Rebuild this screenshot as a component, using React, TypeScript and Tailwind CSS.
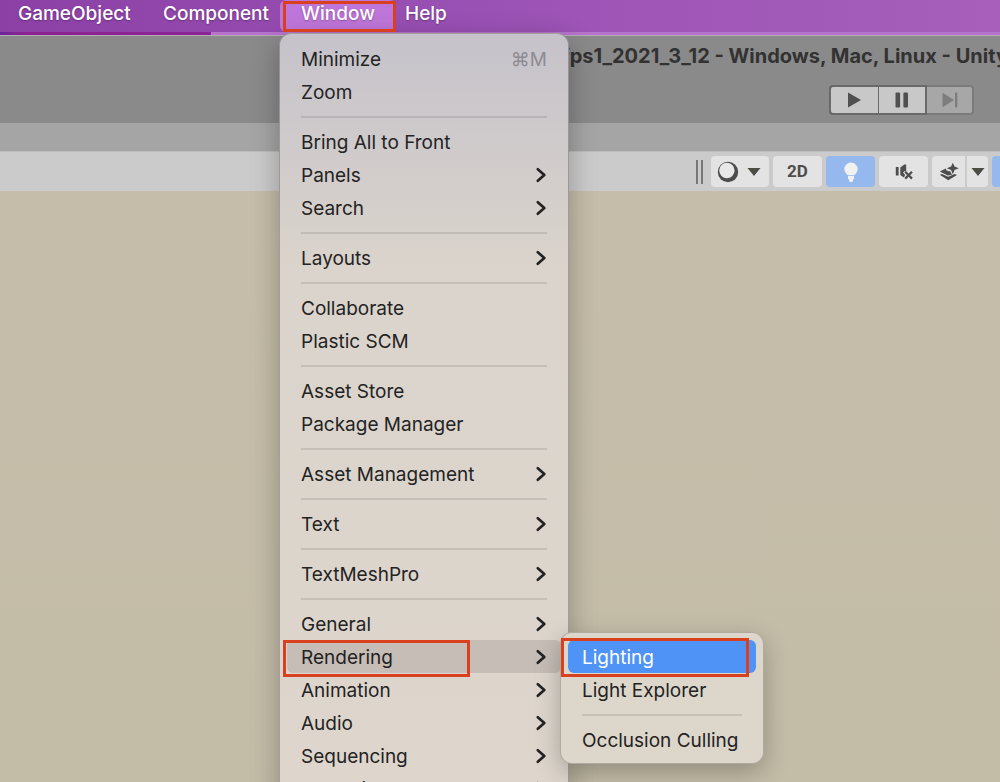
import { ReactNode } from "react";

type Entry = { label: string; arrow?: boolean; shortcut?: string } | null;

const entries: Entry[] = [
  { label: "Minimize", shortcut: "⌘M" },
  { label: "Zoom" },
  null,
  { label: "Bring All to Front" },
  { label: "Panels", arrow: true },
  { label: "Search", arrow: true },
  null,
  { label: "Layouts", arrow: true },
  null,
  { label: "Collaborate" },
  { label: "Plastic SCM" },
  null,
  { label: "Asset Store" },
  { label: "Package Manager" },
  null,
  { label: "Asset Management", arrow: true },
  null,
  { label: "Text", arrow: true },
  null,
  { label: "TextMeshPro", arrow: true },
  null,
  { label: "General", arrow: true },
  { label: "Rendering", arrow: true },
  { label: "Animation", arrow: true },
  { label: "Audio", arrow: true },
  { label: "Sequencing", arrow: true },
  { label: "Analysis", arrow: true },
];

function Chevron() {
  return (
    <svg className="h-4 w-3" viewBox="0 0 12 16" fill="none" stroke="#232323" strokeWidth="2.7" strokeLinecap="round" strokeLinejoin="round" aria-hidden="true">
      <path d="M2.800 2.200 9.300 8 2.800 13.800" />
    </svg>
  );
}

function Separator() {
  return (
    <li role="separator" className="flex h-[17px] items-center px-3.5">
      <span className="h-0.5 w-full bg-black/10" />
    </li>
  );
}

function Callout({ className }: { className: string }) {
  return <span aria-hidden="true" className={`pointer-events-none absolute z-20 border-3 border-[#d9401f] ${className}`} />;
}

function Submenu() {
  return (
    <ul role="menu" className="absolute -top-2 left-[273px] z-10 w-[204px] rounded-xl border border-black/20 bg-[#ddd6cb] p-[7px] shadow-[0_8px_24px_rgba(0,0,0,0.25)]">
      <li className="relative">
        <button role="menuitem" className="flex h-[33px] w-full items-center rounded-md bg-[#5093f6] px-3.5 pt-[3px] text-white">Lighting</button>
        <Callout className="-left-[7px] -top-0.5 h-[39px] w-[188px]" />
      </li>
      <li>
        <button role="menuitem" className="flex h-[33px] w-full items-center px-3.5 pt-[3px] whitespace-nowrap">Light Explorer</button>
      </li>
      <Separator />
      <li>
        <button role="menuitem" className="flex h-[33px] w-full items-center px-3.5 pt-[3px] whitespace-nowrap">Occlusion Culling</button>
      </li>
    </ul>
  );
}

function WindowMenu() {
  return (
    <ul role="menu" className="absolute left-0 top-[33px] z-10 w-[290px] rounded-xl border border-black/25 bg-linear-to-b from-[#c5c2ca] via-[#dbd4cc] via-30% to-[#ded6cd] px-[7px] pt-2 pb-2 text-[19px] font-normal text-[#232323] shadow-[0_8px_28px_rgba(0,0,0,0.28)]">
      {entries.map((entry, i) => {
        if (!entry) return <Separator key={i} />;
        const open = entry.label === "Rendering";
        return (
          <li key={i} className="relative">
            <button
              role="menuitem"
              className={`flex h-[33px] w-full items-center justify-between rounded-md px-3.5 whitespace-nowrap ${open ? "bg-[#c6bdb6]" : ""}`}
            >
              <span className="pt-[3px]">{entry.label}</span>
              {entry.shortcut && <span className="pt-[3px] text-[#8d8b92]">{entry.shortcut}</span>}
              {entry.arrow && <Chevron />}
            </button>
            {open && <Callout className="-left-1 top-0 h-[37px] w-[187px]" />}
            {open && <Submenu />}
          </li>
        );
      })}
    </ul>
  );
}

function MenuBar() {
  return (
    <nav className="relative z-30 flex h-9 items-start border-b border-[#b3aeb5] bg-linear-to-r from-[#8c40a6] via-[#9b52b5] via-50% to-[#a75fbb] text-[19px] font-medium text-white">
      <span className="absolute inset-x-0 bottom-0 h-[3px] bg-[#b774cc]" />
      <span className="absolute bottom-0 left-0 h-[3px] w-[211px] bg-linear-to-r from-[#6a259c] via-[#8b2190] via-10% to-[#8b2596]" />
      <button className="ml-[18px] h-7 w-[114px] text-left [text-shadow:0_1px_2px_rgba(0,0,0,0.3)]">GameObject</button>
      <button className="ml-[31px] h-7 w-[107px] text-left [text-shadow:0_1px_2px_rgba(0,0,0,0.3)]">Component</button>
      <div className="relative ml-[10px] w-[116px] shrink-0">
        <button className="h-8 w-full rounded-md bg-[#bf76da] pb-1 [text-shadow:0_1px_2px_rgba(0,0,0,0.3)]">Window</button>
        <Callout className="left-[3px] top-px h-[31px] w-[113px]" />
        <div className="absolute -left-px top-0"><WindowMenu /></div>
      </div>
      <button className="ml-[9px] h-7 [text-shadow:0_1px_2px_rgba(0,0,0,0.3)]">Help</button>
    </nav>
  );
}

function Tool({ label, className, children }: { label: string; className: string; children: ReactNode }) {
  return (
    <button aria-label={label} className={`flex h-[31px] shrink-0 items-center justify-center ${className}`}>
      {children}
    </button>
  );
}

function Caret() {
  return (
    <svg className="h-2 w-3.5" viewBox="0 0 14 8" fill="#4d4d45" aria-hidden="true"><path d="M.5 0h13L7 8z" /></svg>
  );
}

function PlayControls() {
  return (
    <div className="flex">
      <button aria-label="Play" className="flex h-[30px] w-[49px] items-center justify-center rounded-l-sm border-2 border-r-0 border-[#696969] bg-[#c8c8c8]">
        <svg className="h-4 w-4" viewBox="0 0 16 16" fill="#505050"><path d="M1 .5 14 8 1 15.500z" /></svg>
      </button>
      <button aria-label="Pause" className="flex h-[30px] w-[49px] items-center justify-center border-2 border-l border-[#696969] bg-[#c8c8c8]">
        <svg className="h-4 w-4" viewBox="0 0 16 16" fill="#505050"><rect x="1.500" y=".5" width="4.600" height="15" rx="1" /><rect x="9.400" y=".5" width="4.600" height="15" rx="1" /></svg>
      </button>
      <button aria-label="Step" className="flex h-[30px] w-[47px] items-center justify-center rounded-r-sm border-2 border-l-0 border-[#7b7b7b] bg-[#a7a7a7]">
        <svg className="h-4 w-4" viewBox="0 0 16 16" fill="#7d7d7d"><path d="M.5.8 12 8 .5 15.200z" /><rect x="13" y=".5" width="2.400" height="15" rx=".8" /></svg>
      </button>
    </div>
  );
}

function SceneToolbar() {
  return (
    <div className="flex h-10 items-center justify-end overflow-hidden border-t border-[#bcbcbc] bg-[#cbcbcb]">
      <span className="mr-2 h-6 w-[7px] shrink-0 border-x-2 border-[#777]" />
      <Tool label="Shading mode" className="mr-1 w-[58px] gap-2 rounded-sm bg-[#e3e3e3] pr-0.5">
        <svg className="h-[22px] w-[22px]" viewBox="0 0 22 22">
          <circle cx="11" cy="11" r="10.200" fill="#4d4d4d" />
          <circle cx="9.900" cy="9.500" r="7.700" fill="#e8e8e8" />
        </svg>
        <Caret />
      </Tool>
      <Tool label="2D" className="mr-1 w-[49px] rounded-sm bg-[#e3e3e3] font-[Roboto] text-[17px] font-bold text-[#4d4d4d]">2D</Tool>
      <Tool label="Scene lighting" className="mr-1 w-[49px] rounded-sm bg-[#95b9ef]">
        <svg className="h-5 w-4" viewBox="0 0 16 20" fill="#f1f1f1">
          <path d="M8 .5a6.700 6.700 0 0 0-6.700 6.500c0 2.700 1.700 4.300 3.200 6h7c1.500-1.700 3.200-3.300 3.200-6A6.700 6.700 0 0 0 8 .5z" />
          <path d="M5 13.800h6v2.400a1.500 1.500 0 0 1-1 1.400v.6a2 2 0 0 1-4 0v-.6a1.500 1.500 0 0 1-1-1.400z" />
        </svg>
      </Tool>
      <Tool label="Audio muted" className="mr-1 w-[49px] rounded-sm bg-[#e3e3e3]">
        <svg className="h-[18px] w-[18px]" viewBox="0 0 18 18">
          <path d="M.8 4h2.800v8.500H.8zM5.300 4.500 9.300 1.500H11.200V8.300H9.300l-1.200 1.200 2 2.500-1.200 2.500-3.600-2.500z" fill="#4d4d4d" />
          <path d="m10.200 8.800 6.800 6.800m0-6.800-6.800 6.800" stroke="#4d4d4d" strokeWidth="2.200" fill="none" />
        </svg>
      </Tool>
      <Tool label="Effects" className="mr-0.5 w-[33px] rounded-l-sm bg-[#e3e3e3]">
        <svg className="h-5 w-5" viewBox="0 0 20 20" fill="#4d4d4d">
          <path d="M13.800.8 15.500 4.600 19.800 6.300 15.500 8 13.800 12.200 12.100 8 7.800 6.300 12.100 4.600z" />
          <path d="M6.800 6.600.8 9.600 8.800 13.600 13 12.800 11.300 9.400 7.500 8.500z" />
          <path d="m.8 12.800 2.200-.8 6.200 2.800 6.400-2.800 2.400.9-8.800 5.300z" />
        </svg>
      </Tool>
      <Tool label="Effects options" className="mr-1 w-[21px] rounded-r-sm bg-[#e3e3e3]"><Caret /></Tool>
      <Tool label="Scene visibility" className="w-2 rounded-l-sm bg-[#95b9ef]">{null}</Tool>
    </div>
  );
}

export default function App() {
  return (
    <div className="flex h-screen flex-col overflow-hidden bg-[#c4bda9] font-[Inter,sans-serif]">
      <MenuBar />
      <header className="flex h-[87px] shrink-0 flex-col items-end overflow-hidden bg-[#8a8a8a]">
        <h1 className="-mr-2 flex h-10 items-center text-[20px] font-bold whitespace-nowrap text-[#323232]">fps1_2021_3_12 - Windows, Mac, Linux - Unity</h1>
        <div className="mt-[9px] mr-[26px]"><PlayControls /></div>
      </header>
      <div className="h-7 shrink-0 bg-[#a5a5a5]" />
      <SceneToolbar />
      <main className="flex-1 bg-linear-to-b from-[#c5bda9] to-[#c3bca7]" />
    </div>
  );
}
